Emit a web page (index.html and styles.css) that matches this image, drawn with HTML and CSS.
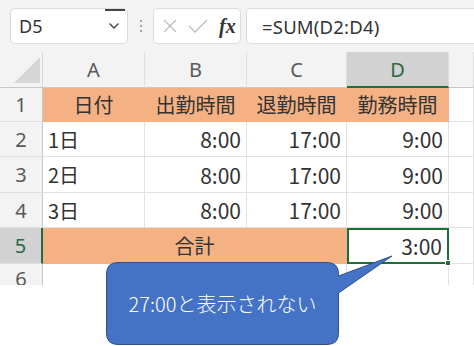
FILE: index.html
```html
<!DOCTYPE html>
<html lang="ja">
<head>
<meta charset="utf-8">
<link rel="stylesheet" href="styles.css">
</head>
<body>
<div class="page">
  <div class="toolbar">
    <div class="namebox">
      <span class="name">D5</span>
      <svg class="chev" width="12" height="8" viewBox="0 0 12 8"><path d="M1.5 1.5 L6 6 L10.5 1.5" fill="none" stroke="#444" stroke-width="1.4"/></svg>
      <span class="topmark"></span>
    </div>
    <div class="dots"><i></i><i></i><i></i></div>
    <div class="fxbox">
      <svg width="16" height="16" viewBox="0 0 16 16"><path d="M2 2 L14 14 M14 2 L2 14" stroke="#bdbdbd" stroke-width="1.3"/></svg>
      <svg width="20" height="16" viewBox="0 0 20 16"><path d="M1 8 L7 14 L19 2" fill="none" stroke="#bdbdbd" stroke-width="1.3"/></svg>
      <span class="fx">fx</span>
    </div>
    <div class="formula">=SUM(D2:D4)</div>
  </div>
  <div class="sheet">
    <div class="grid">
      <div class="corner"><span class="tri"></span></div>
      <div class="ch">A</div>
      <div class="ch">B</div>
      <div class="ch">C</div>
      <div class="ch sel">D</div>
      <div class="ch"></div>

      <div class="rh">1</div>
      <div class="c org center">日付</div>
      <div class="c org center">出勤時間</div>
      <div class="c org center">退勤時間</div>
      <div class="c org center">勤務時間</div>
      <div class="c"></div>

      <div class="rh">2</div>
      <div class="c">1日</div>
      <div class="c num">8:00</div>
      <div class="c num">17:00</div>
      <div class="c num">9:00</div>
      <div class="c"></div>

      <div class="rh">3</div>
      <div class="c">2日</div>
      <div class="c num">8:00</div>
      <div class="c num">17:00</div>
      <div class="c num">9:00</div>
      <div class="c"></div>

      <div class="rh">4</div>
      <div class="c">3日</div>
      <div class="c num">8:00</div>
      <div class="c num">17:00</div>
      <div class="c num">9:00</div>
      <div class="c"></div>

      <div class="rh rsel">5</div>
      <div class="c org center merge">合計</div>
      <div class="c num active">3:00<span class="handle"></span></div>
      <div class="c"></div>

      <div class="rh">6</div>
      <div class="c"></div>
      <div class="c"></div>
      <div class="c"></div>
      <div class="c"></div>
      <div class="c"></div>
    </div>
  </div>
  <div class="callout">
    <svg class="shape" width="300" height="100" viewBox="100 250 300 100"><path d="M118,262.5 H327 Q338.5,262.5 338.5,274 V276 L392,256 L338.5,293 V333 Q338.5,344.5 327,344.5 H118 Q106.5,344.5 106.5,333 V274 Q106.5,262.5 118,262.5 Z" fill="#4472c4" stroke="#2f528f" stroke-width="1"/></svg>
    <span class="ctext">27:00と表示されない</span>
  </div>
</div>
</body>
</html>
```
FILE: styles.css
```css
* { box-sizing: border-box; }
html, body { margin: 0; padding: 0; background: #fff; }
body { font-family: "Noto Sans CJK JP", "Noto Sans", sans-serif; color: #333; }
.page { position: relative; width: 474px; height: 346px; overflow: hidden; }

.toolbar {
  height: 52px;
  background: #f3f3f3;
  display: flex;
  align-items: flex-start;
  padding: 8px 0 0 10px;
}
.namebox {
  position: relative;
  width: 118px; height: 36px;
  background: #fff;
  border: 1px solid #dcdcdc;
  border-radius: 5px;
  display: flex; align-items: center; justify-content: space-between;
  padding: 0 7px 0 8px;
}
.name { font-size: 18px; color: #333; font-family: "Noto Sans", sans-serif; }
.topmark { position: absolute; top: 0; right: 2px; width: 20px; height: 2px; background: #444; }
.dots { width: 25px; height: 36px; display: flex; flex-direction: column; align-items: center; justify-content: center; gap: 3px; }
.dots i { display: block; width: 2px; height: 2px; background: #888; border-radius: 1px; }
.fxbox {
  width: 88px; height: 36px;
  background: #fff;
  border: 1px solid #dcdcdc;
  border-radius: 5px;
  display: flex; align-items: center;
  padding-left: 8px; gap: 10px;
}
.fx { font-family: "Liberation Serif", serif; font-style: italic; font-weight: bold; font-size: 20px; color: #333; margin-left: 1px; }
.formula {
  flex: 1;
  margin-left: 5px;
  height: 36px;
  background: #fff;
  border: 1px solid #dcdcdc;
  border-right: none;
  border-radius: 5px 0 0 5px;
  display: flex; align-items: center;
  padding-left: 15px;
  font-family: "Noto Sans", sans-serif;
  font-size: 18.5px; color: #333; letter-spacing: 0.2px;
}

.sheet { height: 233px; overflow: hidden; }
.grid {
  display: grid;
  grid-template-columns: 43px 102px 102px 100px 102px 1fr;
  grid-template-rows: 36px 34px 35px 36px 35px 36px 30px;
  font-size: 20px;
}
.corner { background: #f3f3f3; border-right: 1px solid #d6d6d6; border-bottom: 1px solid #c8c8c8; position: relative; }
.tri { position: absolute; left: 14px; bottom: 4px; width: 0; height: 0; border-left: 26px solid transparent; border-bottom: 26px solid #d6d6d6; }
.ch {
  background: #f3f3f3;
  border-right: 1px solid #dedede;
  border-bottom: 1px solid #c8c8c8;
  display: flex; align-items: center; justify-content: center;
  color: #595959; font-family: "Noto Sans", sans-serif; font-size: 20px;
}
.ch.sel { background: #d2d2d2; border-bottom: 2px solid #1e6e3c; color: #2a6a44; }
.rh {
  background: #f3f3f3;
  border-right: 1px solid #c8c8c8;
  border-bottom: 1px solid #dedede;
  display: flex; align-items: center; justify-content: center;
  color: #595959; font-family: "Noto Sans", sans-serif; font-size: 20px;
}
.rh.rsel { background: #d2d2d2; border-right: 2px solid #1e6e3c; color: #2a6a44; }
.c {
  border-right: 1px solid #e1e1e1;
  border-bottom: 1px solid #e1e1e1;
  display: flex; align-items: center;
  padding: 0 5px;
  color: #333;
  white-space: nowrap;
}
.c.center { justify-content: center; }
.c.num { justify-content: flex-end; font-size: 21px; }
.c.org { background: #f4b183; border-right-color: #f4b183; border-bottom-color: #f4b183; }
.merge { grid-column: span 3; }
.active { position: relative; border: 2px solid #1e6e3c; }
.handle { position: absolute; right: -4px; bottom: -4px; width: 6px; height: 6px; background: #1e6e3c; border: 1px solid #fff; }

.callout { position: absolute; left: 100px; top: 250px; width: 300px; height: 100px; }
.shape { position: absolute; left: 0; top: 0; }
.ctext {
  position: absolute; left: 6px; top: 12px; width: 233px; height: 83px;
  display: flex; align-items: center; justify-content: center;
  color: #fff; font-size: 20px; font-weight: 300;
}
```
